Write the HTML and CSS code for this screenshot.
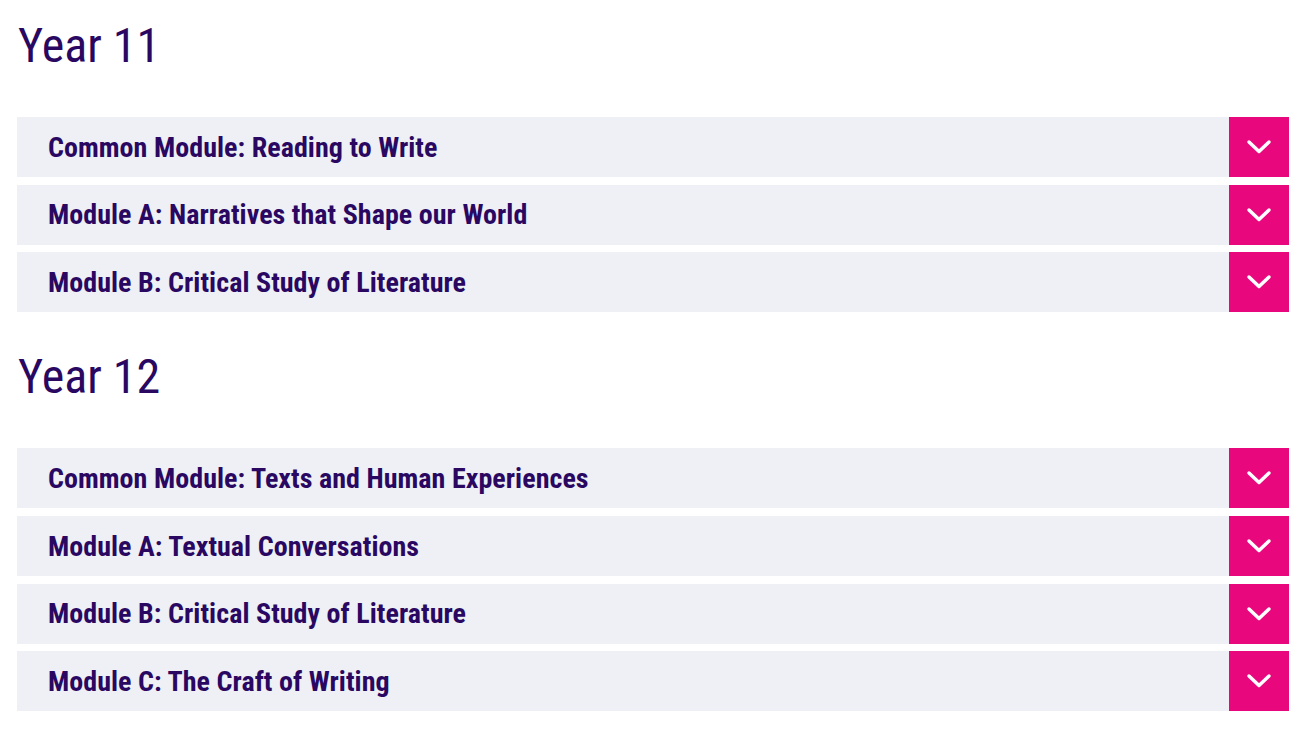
FILE: index.html
```html
<!DOCTYPE html>
<html lang="en">
<head>
    <meta charset="UTF-8">
    <meta name="viewport" content="width=device-width, initial-scale=1.0">
    <title>English Modules</title>
    <link rel="stylesheet" href="styles.css">
</head>
<body>

    <div class="page">
        <h2 class="year-title">Year 11</h2>
        <div class="accordion">
            <div class="acc-item">
                <span class="acc-label">Common Module: Reading to Write</span>
                <span class="acc-toggle"><svg viewBox="0 0 26 16" width="26" height="16"><polyline points="3,3 13,12.5 23,3"/></svg></span>
            </div>
            <div class="acc-item">
                <span class="acc-label">Module A: Narratives that Shape our World</span>
                <span class="acc-toggle"><svg viewBox="0 0 26 16" width="26" height="16"><polyline points="3,3 13,12.5 23,3"/></svg></span>
            </div>
            <div class="acc-item">
                <span class="acc-label">Module B: Critical Study of Literature</span>
                <span class="acc-toggle"><svg viewBox="0 0 26 16" width="26" height="16"><polyline points="3,3 13,12.5 23,3"/></svg></span>
            </div>
        </div>

        <h2 class="year-title">Year 12</h2>
        <div class="accordion">
            <div class="acc-item">
                <span class="acc-label">Common Module: Texts and Human Experiences</span>
                <span class="acc-toggle"><svg viewBox="0 0 26 16" width="26" height="16"><polyline points="3,3 13,12.5 23,3"/></svg></span>
            </div>
            <div class="acc-item">
                <span class="acc-label">Module A: Textual Conversations</span>
                <span class="acc-toggle"><svg viewBox="0 0 26 16" width="26" height="16"><polyline points="3,3 13,12.5 23,3"/></svg></span>
            </div>
            <div class="acc-item">
                <span class="acc-label">Module B: Critical Study of Literature</span>
                <span class="acc-toggle"><svg viewBox="0 0 26 16" width="26" height="16"><polyline points="3,3 13,12.5 23,3"/></svg></span>
            </div>
            <div class="acc-item">
                <span class="acc-label">Module C: The Craft of Writing</span>
                <span class="acc-toggle"><svg viewBox="0 0 26 16" width="26" height="16"><polyline points="3,3 13,12.5 23,3"/></svg></span>
            </div>
        </div>
    </div>

</body>
</html>
```

FILE: styles.css
```css
body {
    margin: 0;
    background-color: white;
    font-family: Roboto, "Liberation Sans", sans-serif;
    font-stretch: 80%;
    color: #2a0862;
}
.page {
    padding: 17px 26px 0 17px;
}
.year-title {
    font-size: 48px;
    font-weight: 400;
    margin: 0 0 0 1px;
    line-height: 58px;
}
.accordion {
    display: flex;
    flex-direction: column;
    gap: 7.7px;
    margin-top: 42px;
    margin-bottom: 36px;
}
.acc-item {
    display: flex;
    align-items: center;
    height: 60px;
    background-color: #eef0f5;
}
.acc-label {
    flex: 1;
    padding-left: 31px;
    font-size: 28px;
    font-weight: 700;
    letter-spacing: 0.05px;
}
.acc-toggle {
    display: flex;
    align-items: center;
    justify-content: center;
    width: 60px;
    height: 60px;
    background-color: #e8077c;
}
.acc-toggle svg {
    fill: none;
    stroke: white;
    stroke-width: 3.5;
    stroke-linecap: round;
    stroke-linejoin: round;
}
```
